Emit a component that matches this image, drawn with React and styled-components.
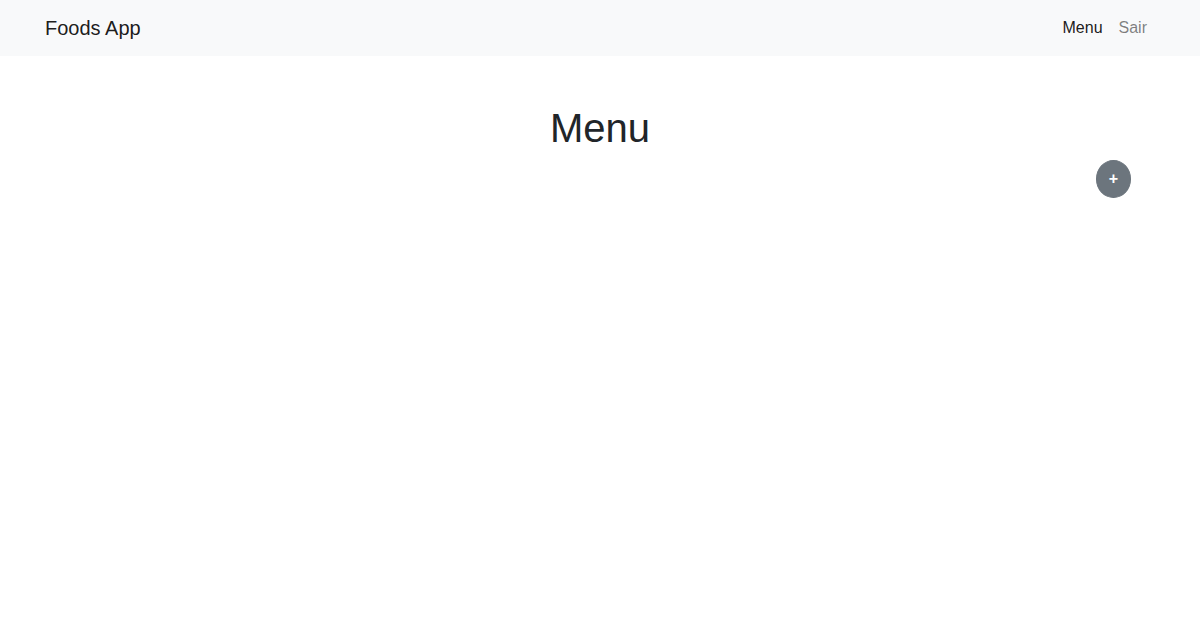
import React from "react";
import styled, { createGlobalStyle } from "styled-components";

const GlobalStyle = createGlobalStyle`
  *, *::before, *::after {
    box-sizing: border-box;
  }
  body {
    margin: 0;
    font-family: "Liberation Sans", Arial, sans-serif;
    font-size: 16px;
    line-height: 1.5;
    color: #212529;
    background: #fff;
  }
`;

const Navbar = styled.nav`
  background-color: #f8f9fa;
  padding: 8px 0;
`;

const NavContainer = styled.div`
  max-width: 1140px;
  margin: 0 auto;
  padding: 0 15px;
  display: flex;
  align-items: center;
  justify-content: space-between;
`;

const Brand = styled.a`
  font-size: 20px;
  line-height: 30px;
  padding: 5px 0;
  color: rgba(0, 0, 0, 0.9);
  text-decoration: none;
`;

const NavList = styled.ul`
  display: flex;
  list-style: none;
  margin: 0;
  padding: 0;
`;

const NavLink = styled.a`
  display: block;
  padding: 8px;
  line-height: 24px;
  text-decoration: none;
  color: ${props => (props.active ? "rgba(0, 0, 0, 0.9)" : "rgba(0, 0, 0, 0.5)")};
`;

const Container = styled.main`
  max-width: 1140px;
  margin: 0 auto;
  padding: 0 15px;
`;

const Title = styled.h1`
  margin: 48px 0 8px;
  font-size: 40px;
  font-weight: 500;
  line-height: 1.2;
  text-align: center;
`;

const Actions = styled.div`
  display: flex;
  justify-content: flex-end;
  padding-right: 24px;
`;

const AddButton = styled.button`
  font-family: inherit;
  font-size: 16px;
  font-weight: 700;
  line-height: 24px;
  padding: 6px 12px;
  border: 1px solid #6c757d;
  border-radius: 50%;
  background-color: #6c757d;
  color: #fff;
  cursor: pointer;
`;

const App = () => (
  <>
    <GlobalStyle />
    <Navbar>
      <NavContainer>
        <Brand href="#">Foods App</Brand>
        <NavList>
          <li><NavLink href="#" active>Menu</NavLink></li>
          <li><NavLink href="#">Sair</NavLink></li>
        </NavList>
      </NavContainer>
    </Navbar>
    <Container>
      <Title>Menu</Title>
      <Actions>
        <AddButton>+</AddButton>
      </Actions>
    </Container>
  </>
);

export default App;
